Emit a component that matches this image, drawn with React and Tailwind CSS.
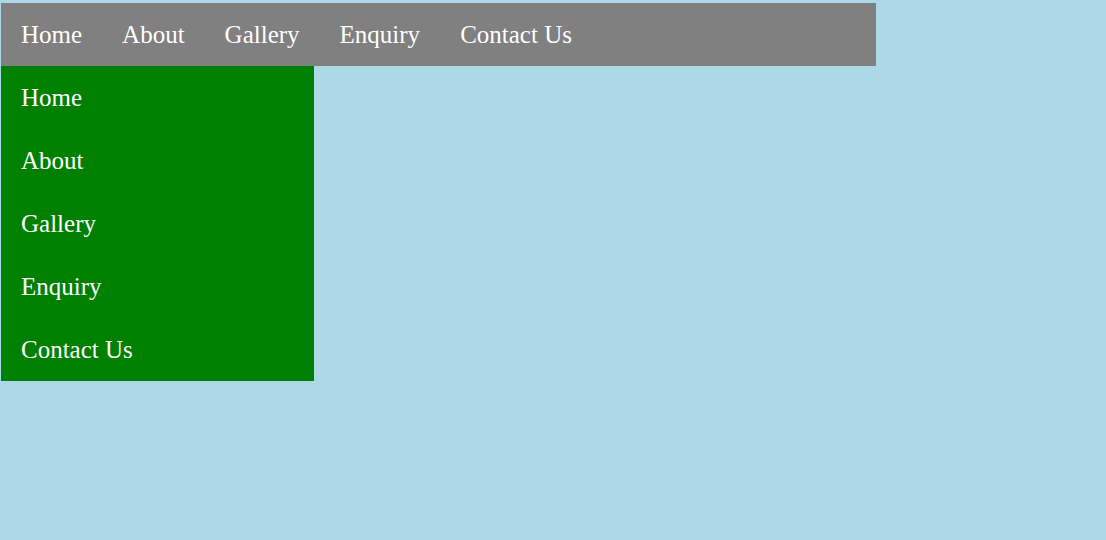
import React from 'react';

const items = ['Home', 'About', 'Gallery', 'Enquiry', 'Contact Us'];

export default function App() {
  return (
    <div
      className="min-h-screen bg-[#add8e6] pl-[1px] pt-[3px] text-white"
      style={{ fontFamily: '"Liberation Serif", "Times New Roman", serif' }}
    >
      <ul className="flex h-[63px] w-[875px] bg-[#808080]">
        {items.map((item) => (
          <li key={item} className="flex items-center px-5 text-[25px] leading-none">
            {item}
          </li>
        ))}
      </ul>
      <ul className="w-[313px] bg-[#008000]">
        {items.map((item) => (
          <li key={item} className="flex h-[63px] items-center px-5 text-[25px] leading-none">
            {item}
          </li>
        ))}
      </ul>
    </div>
  );
}
